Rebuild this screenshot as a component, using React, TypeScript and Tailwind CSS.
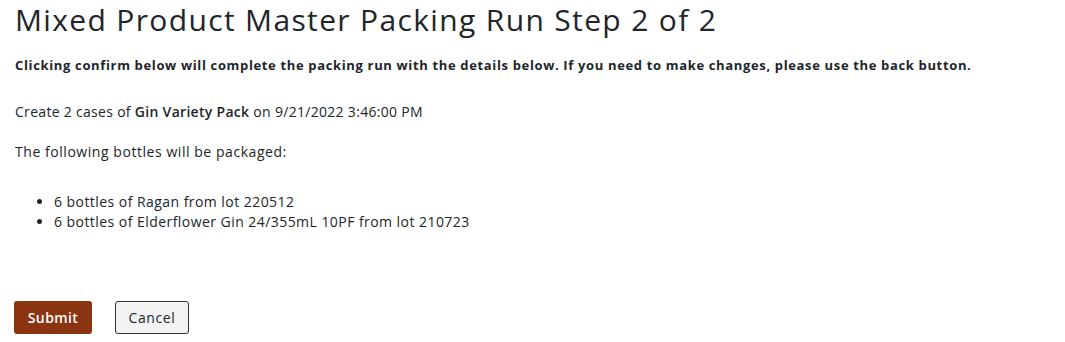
export default function App() {
  return (
    <div className="min-h-screen bg-white px-[15px] text-[#212529] font-['Open_Sans',sans-serif]">
      <h1 className="pt-[2px] text-[30px] leading-[36px] font-normal tracking-[1.35px]">Mixed Product Master Packing Run Step 2 of 2</h1>
      <p className="mt-[17px] text-[13px] font-bold leading-[20px] tracking-[0.65px]">
        Clicking confirm below will complete the packing run with the details below. If you need to make changes, please use the back button.
      </p>
      <p className="mt-[27px] text-[14px] leading-[20px] tracking-[0.3px]">
        Create 2 cases of <span className="font-semibold">Gin Variety Pack</span> on 9/21/2022 3:46:00 PM
      </p>
      <p className="mt-[20px] text-[14px] leading-[20px] tracking-[0.55px]">The following bottles will be packaged:</p>
      <ul className="mt-[30px] list-disc pl-[39px] text-[14px] leading-[20px] tracking-[0.45px]">
        <li>6 bottles of Ragan from lot 220512</li>
        <li>6 bottles of Elderflower Gin 24/355mL 10PF from lot 210723</li>
      </ul>
      <div className="mt-[69px] flex gap-[23px]">
        <button className="h-[33px] w-[78px] -ml-px rounded-[3px] bg-[#8b3412] text-[14px] font-semibold tracking-[0.4px] text-white">Submit</button>
        <button className="h-[33px] w-[74px] rounded-[3px] border border-[#333] bg-[#f3f3f3] text-[14px] tracking-[0.6px] text-[#212529]">Cancel</button>
      </div>
    </div>
  );
}
